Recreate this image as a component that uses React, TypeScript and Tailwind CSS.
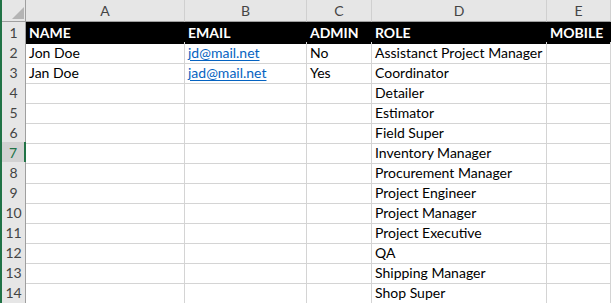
import React from "react";

const cols = ["A", "B", "C", "D", "E"];
const data: { a?: string; b?: string; c?: string; d?: string; e?: string }[] = [
  { a: "NAME", b: "EMAIL", c: "ADMIN", d: "ROLE", e: "MOBILE" },
  { a: "Jon Doe", b: "jd@mail.net", c: "No", d: "Assistanct Project Manager" },
  { a: "Jan Doe", b: "jad@mail.net", c: "Yes", d: "Coordinator" },
  { d: "Detailer" },
  { d: "Estimator" },
  { d: "Field Super" },
  { d: "Inventory Manager" },
  { d: "Procurement Manager" },
  { d: "Project Engineer" },
  { d: "Project Manager" },
  { d: "Project Executive" },
  { d: "QA" },
  { d: "Shipping Manager" },
  { d: "Shop Super" },
];

const grid = "grid grid-cols-[24px_159px_122px_65px_175px_64px]";

export default function App() {
  return (
    <div
      className="flex h-[303px] w-[611px] overflow-hidden bg-white text-[14px] text-black"
      style={{ fontFamily: "Lato, 'Liberation Sans', sans-serif" }}
    >
      <div className="w-[2px] shrink-0 bg-[#217346]" />
      <div className="flex flex-col">
        <div className={`${grid} h-[22px] bg-[#e6e6e6]`}>
          <div className="relative border-r border-b border-[#9f9f9f]">
            <svg className="absolute left-[10px] top-[7px]" width="12" height="12" viewBox="0 0 12 12">
              <polygon points="12,0 12,12 0,12" fill="#b4b4b4" />
            </svg>
          </div>
          {cols.map((c) => (
            <div
              key={c}
              className="flex items-center justify-center border-r border-b border-r-[#d0d0d0] border-b-[#9f9f9f] text-[#444444]"
            >
              {c}
            </div>
          ))}
        </div>
        {data.map((r, i) => {
          const n = i + 1;
          const header = n === 1;
          const sel = n === 7;
          const cellBase = header
            ? "flex items-center px-[3px] bg-black text-white font-bold border-r border-b border-black whitespace-nowrap overflow-visible"
            : "flex items-center px-[3px] border-r border-b border-[#d4d4d4] whitespace-nowrap overflow-visible";
          return (
            <div key={n} className={`${grid} h-[20px]`}>
              <div
                className={
                  sel
                    ? "flex items-center justify-center bg-[#d2d2d2] border-b border-b-[#9f9f9f] border-r-2 border-r-[#217346] text-[#217346]"
                    : "flex items-center justify-center bg-[#e6e6e6] border-b border-b-[#c6c6c6] border-r border-r-[#9f9f9f] text-[#444444]"
                }
              >
                {n}
              </div>
              <div className={cellBase}>{r.a}</div>
              <div className={cellBase}>
                {r.b && !header ? (
                  <span className="text-[#0563c1] underline underline-offset-2">{r.b}</span>
                ) : (
                  r.b
                )}
              </div>
              <div className={cellBase}>{r.c}</div>
              <div className={cellBase}>{r.d}</div>
              <div className={cellBase}>{r.e}</div>
            </div>
          );
        })}
      </div>
    </div>
  );
}
